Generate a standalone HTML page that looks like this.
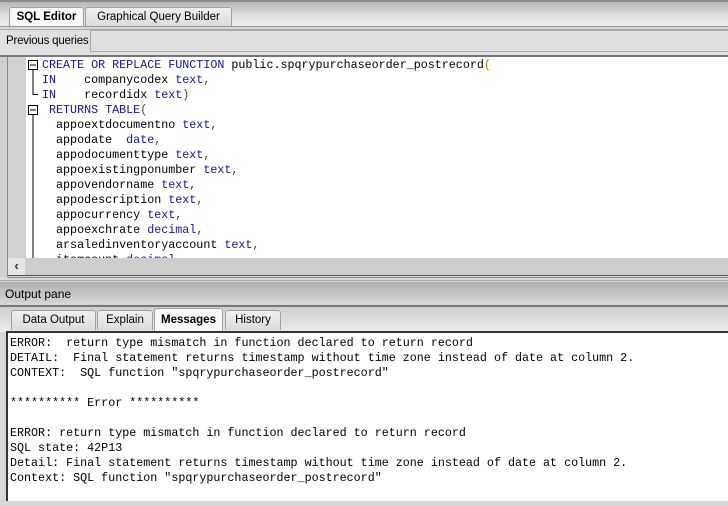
<!DOCTYPE html>
<html><head><style>
*{margin:0;padding:0;box-sizing:border-box}
body{width:728px;height:506px;overflow:hidden;background:#d8d8d8;font-family:"Liberation Sans",sans-serif;font-size:11.5px;position:relative}
.a{position:absolute}
.mono{font-family:"Liberation Mono",monospace;font-size:11.7px;white-space:pre;line-height:15px}
.tab{position:absolute;border:1px solid #a0a0a0;border-bottom:none;border-radius:3px 3px 0 0;background:linear-gradient(#f0f0f0,#dcdcdc);text-align:center;font-size:11.5px;color:#000}
.k{color:#15159a}.p{color:#444}
</style></head><body>
<div class="a" style="left:0;top:0;width:728px;height:26px;background:linear-gradient(#b4b4b4,#dedede 50%,#ececec);border-top:2px solid #8a8a8a"></div>
<div class="tab" style="left:9px;top:7px;width:75px;height:20px;background:#f8f8f8;font-weight:bold;line-height:19px">SQL Editor</div>
<div class="tab" style="left:85px;top:7px;width:147px;height:19px;line-height:18px">Graphical Query Builder</div>
<div class="a" style="left:0;top:26px;width:728px;height:1px;background:#999"></div>
<div class="a" style="left:0;top:29px;width:728px;height:1px;background:#aaa"></div>
<div class="a" style="left:0;top:30px;width:728px;height:25px;background:#e0e0e0"></div>
<div class="a" style="left:6px;top:35px;font-size:11.5px;letter-spacing:-0.2px">Previous queries</div>
<div class="a" style="left:90px;top:30px;width:638px;height:22px;border:1px solid #aaa;background:#e0e0e0;border-right:none"></div>
<div class="a" style="left:0;top:55px;width:728px;height:2px;background:#777"></div>
<div class="a" style="left:0;top:57px;width:8px;height:220px;background:#d0d0d0;border-right:1px solid #888"></div>
<div class="a" style="left:8px;top:57px;width:18px;height:201px;background:#d2d2d2"></div>
<div class="a" style="left:26px;top:57px;width:702px;height:201px;background:#fff;overflow:hidden">
<svg class="a" style="left:0;top:0" width="16" height="201"><g fill="none" stroke="#000" stroke-width="1">
<rect x="2.5" y="3.5" width="9" height="9" fill="#fff"/><line x1="4" y1="8" x2="10" y2="8"/><line x1="7" y1="13" x2="7" y2="38"/><line x1="7" y1="37.5" x2="12" y2="37.5"/>
<rect x="2.5" y="48.5" width="9" height="9" fill="#fff"/><line x1="4" y1="53" x2="10" y2="53"/><line x1="7" y1="58" x2="7" y2="201"/></g></svg>
<div class="a mono" style="left:16px;top:1px"><span class="k">CREATE OR REPLACE FUNCTION</span> public.spqrypurchaseorder_postrecord<span style="color:#c07000">(</span>
<span class="k">IN</span>    companycodex <span class="k">text</span><span class="p">,</span>
<span class="k">IN</span>    recordidx <span class="k">text</span><span class="p">)</span>
 <span class="k">RETURNS TABLE</span><span class="p">(</span>
  appoextdocumentno <span class="k">text</span><span class="p">,</span>
  appodate  <span class="k">date</span><span class="p">,</span>
  appodocumenttype <span class="k">text</span><span class="p">,</span>
  appoexistingponumber <span class="k">text</span><span class="p">,</span>
  appovendorname <span class="k">text</span><span class="p">,</span>
  appodescription <span class="k">text</span><span class="p">,</span>
  appocurrency <span class="k">text</span><span class="p">,</span>
  appoexchrate <span class="k">decimal</span><span class="p">,</span>
  arsaledinventoryaccount <span class="k">text</span><span class="p">,</span>
  itemcount <span class="k">decimal</span><span class="p">,</span></div>
</div>
<div class="a" style="left:8px;top:258px;width:720px;height:17px;background:#cdcdcd"></div>
<div class="a" style="left:8px;top:258px;width:17px;height:17px;background:#e6e6e6;text-align:center;font-size:13px;line-height:16px;font-weight:bold;color:#333">‹</div>
<div class="a" style="left:8px;top:275px;width:720px;height:1px;background:#555"></div>
<div class="a" style="left:8px;top:277px;width:720px;height:1px;background:#888"></div>
<div class="a" style="left:0;top:280px;width:728px;height:1px;background:#aaa"></div>
<div class="a" style="left:0;top:282px;width:728px;height:23px;background:linear-gradient(#b0b0b0,#d8d8d8)"></div>
<div class="a" style="left:5px;top:287px;font-size:12px">Output pane</div>
<div class="a" style="left:0;top:305px;width:728px;height:2px;background:#777"></div>
<div class="a" style="left:0;top:307px;width:728px;height:25px;background:linear-gradient(#cfcfcf,#ececec)"></div>
<div class="tab" style="left:11px;top:310px;width:85px;height:20px;line-height:19px">Data Output</div>
<div class="tab" style="left:97px;top:310px;width:56px;height:20px;line-height:19px">Explain</div>
<div class="tab" style="left:154px;top:308px;width:69px;height:23px;line-height:23px;background:#f8f8f8;font-weight:bold">Messages</div>
<div class="tab" style="left:225px;top:310px;width:56px;height:20px;line-height:19px">History</div>
<div class="a" style="left:6px;top:331px;width:722px;height:170px;background:#fff;border-left:2px solid #333;border-top:2px solid #333"></div>
<div class="a mono" style="left:10px;top:336px;color:#000">ERROR:  return type mismatch in function declared to return record
DETAIL:  Final statement returns timestamp without time zone instead of date at column 2.
CONTEXT:  SQL function "spqrypurchaseorder_postrecord"

********** Error **********

ERROR: return type mismatch in function declared to return record
SQL state: 42P13
Detail: Final statement returns timestamp without time zone instead of date at column 2.
Context: SQL function "spqrypurchaseorder_postrecord"</div>
</body></html>
